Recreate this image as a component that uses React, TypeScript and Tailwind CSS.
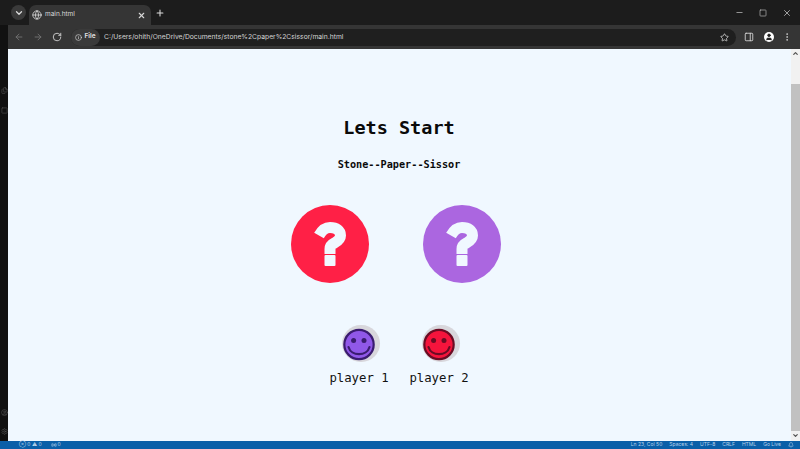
import { Star, PanelRight, User, EllipsisVertical, ArrowLeft, ArrowRight, RotateCw, Info, ChevronDown, Globe, X, Plus, Minus, Square, ChevronUp, ChevronDown as Down, Bell, Radio, Files, Settings, CircleUser } from "lucide-react"

function Question({ bg }: { bg: string }) {
    return (
        <div className={`w-[78px] h-[78px] rounded-full flex items-center justify-center ${bg}`}>
            <svg width="32" height="44" viewBox="0 0 32 44" fill="none">
                <path d="M5 13.5 C8 8 12 5.5 16 5.5 C22.5 5.5 26.5 8.5 26.5 13.5 C26.5 17.5 23 19.5 20.5 21 C17.5 22.5 16 24 16 27 L16 32" stroke="#f0f8ff" strokeWidth="11" />
                <rect x="10.5" y="33" width="11" height="11" rx="1" fill="#f0f8ff" />
            </svg>
        </div>
    )
}

function Player({ name, ring, face }: { name: string, ring: string, face: string }) {
    return (
        <div className="flex flex-col items-center w-[60px]">
            <div className="ml-[4px] w-[38px] h-[37px] rounded-full bg-[#d8d7dc] flex items-start justify-start pl-[1px] pt-[3px]">
                <svg width="32" height="33" viewBox="0 0 32 33">
                    <circle cx="16" cy="16.5" r="14.7" fill={face} stroke={ring} strokeWidth="2.2" />
                    <circle cx="10.6" cy="12.5" r="2.5" fill={ring} />
                    <circle cx="21" cy="12.5" r="2.5" fill={ring} />
                    <path d="M5.5 19 C8 28.5 24 28.5 26.5 19" fill="none" stroke={ring} strokeWidth="2.2" strokeLinecap="round" />
                </svg>
            </div>
            <p className="mt-[8px] text-[12.3px] leading-[16px] text-[#111] whitespace-nowrap font-['DejaVu_Sans_Mono',monospace]">{name}</p>
        </div>
    )
}

export default function App() {
    return (
        <div className="w-[800px] h-[449px] flex flex-col overflow-hidden bg-[#111] font-['Inter',sans-serif]">
            {/* Barra de pestañas */}
            <div className="h-[25px] bg-[#1c1c1c] flex items-center pl-[11px] shrink-0">
                <div className="w-[15px] h-[15px] rounded-full bg-[#3a3a3a] flex items-center justify-center text-[#ddd]">
                    <ChevronDown size={10} strokeWidth={3} />
                </div>
                <div className="ml-[3px] mt-[5px] w-[122px] h-[20px] rounded-t-[7px] bg-[#353535] flex items-center pl-[3px] pr-[5px] text-[#d8d8d8]">
                    <Globe size={10} />
                    <span className="ml-[3px] text-[6.5px] flex-1">main.html</span>
                    <X size={9} strokeWidth={3} />
                </div>
                <Plus size={10} strokeWidth={2.5} className="ml-[4px] text-[#ddd]" />
                <div className="ml-auto flex items-center text-[#bbb]">
                    <Minus size={9} className="mr-[15px]" />
                    <Square size={8} className="mr-[15px]" />
                    <X size={10} className="mr-[8px]" />
                </div>
            </div>

            {/* Barra de direcciones */}
            <div className="h-[24px] bg-[#353535] flex items-center pl-[6px] shrink-0 ml-[8px]">
                <ArrowLeft size={10} className="text-[#777]" />
                <ArrowRight size={10} className="ml-[9px] text-[#777]" />
                <RotateCw size={10} className="ml-[9px] text-[#ddd]" />
                <div className="ml-[9px] w-[665px] h-[17px] rounded-full bg-[#1f1f1f] flex items-center pr-[7px]">
                    <div className="h-[17px] w-[29px] rounded-full bg-[#3a3a3a] flex items-center justify-center gap-[2px] text-[#e4e4e4]">
                        <Info size={7} />
                        <span className="text-[6.5px] font-semibold">File</span>
                    </div>
                    <span className="ml-[4px] text-[6.75px] text-[#d4d4d4] flex-1 whitespace-nowrap">C:/Users/ohith/OneDrive/Documents/stone%2Cpaper%2Csissor/main.html</span>
                    <Star size={9} className="text-[#ddd]" />
                </div>
                <PanelRight size={10} className="ml-[8px] text-[#ddd]" />
                <div className="ml-[10px] w-[10px] h-[10px] rounded-full bg-white flex items-center justify-center">
                    <User size={8} fill="#222" className="text-[#222]" />
                </div>
                <EllipsisVertical size={10} className="ml-[8px] text-[#ccc]" />
            </div>

            <div className="flex flex-1 min-h-0">
                {/* Borde del editor detrás */}
                <div className="w-[8px] shrink-0 bg-[#111] flex flex-col items-center pt-[38px] pb-[6px] text-[#555]">
                    <Files size={7} />
                    <Square size={7} className="mt-[13px]" />
                    <CircleUser size={7} className="mt-auto" />
                    <Settings size={7} className="mt-[12px]" />
                </div>
                {/* Página */}
                <div className="flex-1 bg-[#f0f8ff] flex flex-col items-center pt-[66px] pr-[1px] text-[#0a0a0a] font-['DejaVu_Sans_Mono',monospace]">
                    <h1 className="text-[18.5px] leading-[26px] font-bold">Lets Start</h1>
                    <h2 className="mt-[17px] text-[10.2px] leading-[14px] font-bold">Stone--Paper--Sissor</h2>
                    <div className="mt-[33px] mr-[6px] flex gap-[54px]">
                        <Question bg="bg-[#ff2046]" />
                        <Question bg="bg-[#ab66e0]" />
                    </div>
                    <div className="mt-[42px] flex gap-[20px]">
                        <Player name="player 1" ring="#3a1c70" face="#9058e8" />
                        <Player name="player 2" ring="#6a0c24" face="#f5143c" />
                    </div>
                </div>
                {/* Scrollbar */}
                <div className="w-[9px] shrink-0 bg-[#f1f1f1] flex flex-col items-center">
                    <ChevronUp size={7} strokeWidth={4} className="mt-[1px] text-[#505050]" />
                    <div className="mt-[27px] w-full h-[347px] bg-[#c1c1c1]" />
                    <Down size={7} strokeWidth={4} className="mt-[1px] text-[#505050]" />
                </div>
            </div>

            {/* Barra de estado */}
            <div className="h-[8px] bg-[#0a5fa8] flex items-center text-[#b9d3ea] text-[5px] shrink-0 whitespace-nowrap">
                <span className="ml-[19px]">⊗ 0 ⚠ 0</span>
                <Radio size={6} className="ml-[9px]" />
                <span className="ml-[1px]">0</span>
                <span className="ml-auto">Ln 23, Col 50</span>
                <span className="ml-[7px]">Spaces: 4</span>
                <span className="ml-[7px]">UTF-8</span>
                <span className="ml-[7px]">CRLF</span>
                <span className="ml-[7px]">HTML</span>
                <span className="ml-[7px]">Go Live</span>
                <Bell size={6} className="ml-[7px] mr-[6px]" />
            </div>
        </div>
    )
}
